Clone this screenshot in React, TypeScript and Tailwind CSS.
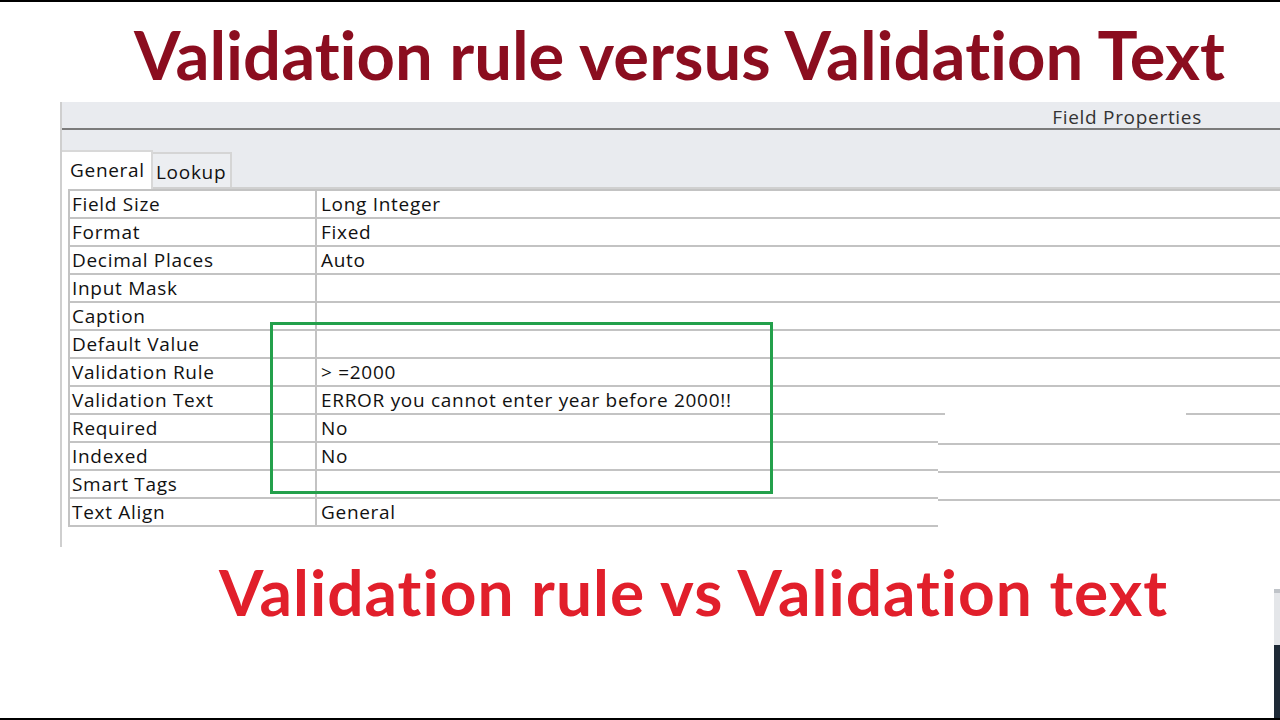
import React from 'react'

type Row = { label: string; value: string; wide: boolean; filler: 'line' | 'split' | 'none' }

const rows: Row[] = [
  { label: 'Field Size', value: 'Long Integer', wide: true, filler: 'line' },
  { label: 'Format', value: 'Fixed', wide: true, filler: 'line' },
  { label: 'Decimal Places', value: 'Auto', wide: true, filler: 'line' },
  { label: 'Input Mask', value: '', wide: true, filler: 'line' },
  { label: 'Caption', value: '', wide: true, filler: 'line' },
  { label: 'Default Value', value: '', wide: true, filler: 'line' },
  { label: 'Validation Rule', value: '> =2000', wide: true, filler: 'line' },
  { label: 'Validation Text', value: 'ERROR you cannot enter year before 2000!!', wide: false, filler: 'split' },
  { label: 'Required', value: 'No', wide: false, filler: 'line' },
  { label: 'Indexed', value: 'No', wide: false, filler: 'line' },
  { label: 'Smart Tags', value: '', wide: false, filler: 'line' },
  { label: 'Text Align', value: 'General', wide: false, filler: 'none' },
]

function PropRow({ row }: { row: Row }) {
  return (
    <div className="flex h-[28px]">
      <div className="w-[247px] shrink-0 border-r-2 border-b-2 border-[#c3c3c3] pl-[2px] flex items-center">
        {row.label}
      </div>
      <div className="w-[621px] shrink-0 border-b-2 border-[#c3c3c3] pl-[4px] flex items-center">
        {row.value}
      </div>
      {row.filler === 'line' && (
        <div className={`flex-1 border-b-2 ${row.wide ? 'border-[#c3c3c3]' : 'border-[#c3c3c3] translate-y-[2px]'}`} />
      )}
      {row.filler === 'split' && (
        <div className="flex-1 flex">
          <div className="w-[7px] border-b-2 border-[#c3c3c3]" />
          <div className="w-[241px]" />
          <div className="flex-1 border-b-2 border-[#c3c3c3]" />
        </div>
      )}
      {row.filler === 'none' && <div className="flex-1" />}
    </div>
  )
}

export default function App() {
  return (
    <div className="w-[1280px] h-[720px] bg-white relative overflow-hidden border-t-2 border-b-2 border-black">
      {/* top title */}
      <h1
        className="pl-[134px] pt-[12px] h-[98px] text-[67px] leading-[80px] font-bold text-[#8b0d1f] whitespace-nowrap [font-variant-ligatures:none]"
        style={{ fontFamily: 'Lato, "Liberation Sans", sans-serif' }}
      >
        Validation rule versus Validation Text
      </h1>

      {/* access field properties panel */}
      <div
        className="ml-[60px] mt-[2px] h-[445px] border-l-2 border-[#cfcfcf] text-[19px] tracking-[0.7px] text-[#111]"
        style={{ fontFamily: '"Open Sans", "Noto Sans", sans-serif' }}
      >
        <div className="h-[28px] bg-[#e9ebef] border-b-2 border-[#7b7b7b] flex items-end justify-end pr-[78px] leading-[22px] text-[#333]">
          Field Properties
        </div>
        <div className="h-[59px] bg-[#e9ebef] flex items-end border-b-2 border-[#d0d0d0]">
          <div className="w-[91px] h-[39px] bg-white border-t-2 border-r-2 border-[#d8d8d8] pl-[8px] flex items-center -mb-[2px]">
            General
          </div>
          <div className="w-[79px] h-[35px] bg-[#eceef1] border-t-2 border-r-2 border-[#d5d5d5] pl-[3px] pt-[3px] flex items-center">
            Lookup
          </div>
        </div>
        <div className="pl-[6px] bg-white">
          <div className="border-t-2 border-l-2 border-[#c3c3c3]">
            {rows.map((r) => (
              <PropRow key={r.label} row={r} />
            ))}
          </div>
        </div>
      </div>

      {/* highlight box */}
      <div className="absolute left-[270px] top-[320px] w-[503px] h-[172px] border-[3px] border-[#23a04b]" />

      {/* bottom title */}
      <h2
        className="pl-[219px] pt-[8px] text-[64px] leading-[74px] tracking-[1px] font-bold text-[#e11f2b] whitespace-nowrap [font-variant-ligatures:none]"
        style={{ fontFamily: 'Lato, "Liberation Sans", sans-serif' }}
      >
        Validation rule vs Validation text
      </h2>

      {/* sliver of another window at the right edge */}
      <div className="absolute right-0 top-[587px] w-[6px] h-[131px] flex flex-col">
        <div className="h-[4px] bg-[#bfc3c8]" />
        <div className="h-[52px] bg-[#e4e6e9]" />
        <div className="flex-1 bg-[#1f2a37]" />
      </div>
    </div>
  )
}
